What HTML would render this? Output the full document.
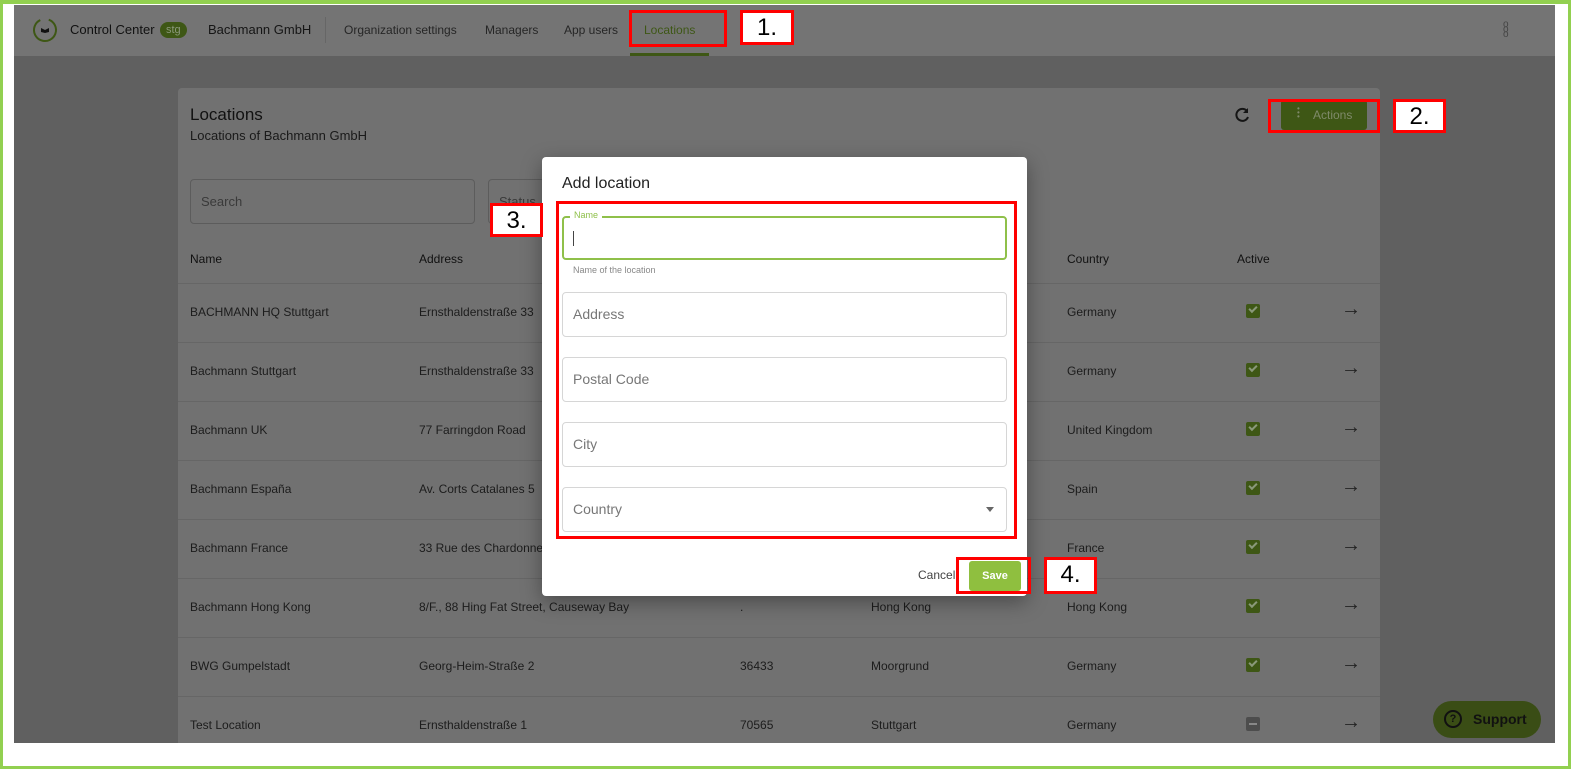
<!DOCTYPE html>
<html><head><meta charset="utf-8"><style>
*{box-sizing:border-box;margin:0;padding:0}
body{width:1571px;height:769px;background:#fff;position:relative;overflow:hidden;font-family:"Liberation Sans",sans-serif}
.frame{position:absolute;left:0;top:0;width:1571px;height:769px;border:3px solid #92d050;border-top-width:4px}
.shot{position:absolute;left:14px;top:5px;width:1541px;height:738px;background:#606060;overflow:hidden}
.top{position:absolute;left:0;top:0;width:1541px;height:51px;background:#747474}
.t{position:absolute;white-space:nowrap}
.card{position:absolute;left:164px;top:83px;width:1202px;height:700px;background:#717171;border-radius:4px}
.row{position:absolute;left:0;width:1202px;border-top:1px solid #666}
.red{position:absolute;border:3px solid #f00}
.lab{position:absolute;border:3px solid #f00;background:#fff;font-size:24px;color:#000;text-align:center;line-height:29px}
.field{position:absolute;left:20px;width:445px;height:45px;border:1px solid #d6d6d6;border-radius:4px;font-size:14px;color:#777;padding:13px 10px}
.chk{position:absolute;width:14px;height:14px;background:#3e5715;border-radius:2px}
.chk:after{content:"";position:absolute;left:3px;top:2px;width:6px;height:3px;border-left:2px solid #8a987a;border-bottom:2px solid #8a987a;transform:rotate(-45deg)}
</style></head><body>
<div class="frame"></div>
<div class="shot">
 <div class="top">
  <svg style="position:absolute;left:18px;top:12px" width="26" height="26"><circle cx="13" cy="13" r="11" fill="none" stroke="#3e5715" stroke-width="2" stroke-dasharray="60 9" transform="rotate(-70 13 13)"/><path d="M9 11l4 2 4-2v4l-4 1-4-1z" fill="#111"/></svg>
  <div class="t" style="left:56px;top:17px;font-size:13px;color:#111">Control Center</div>
  <div class="t" style="left:146px;top:17px;background:#3e5715;color:#8a987a;font-size:11px;border-radius:9px;padding:2px 6px">stg</div>
  <div class="t" style="left:194px;top:17px;font-size:13px;color:#151515">Bachmann GmbH</div>
  <div style="position:absolute;left:311px;top:12px;width:1px;height:26px;background:#666"></div>
  <div class="t" style="left:330px;top:18px;font-size:12px;color:#262626">Organization settings</div>
  <div class="t" style="left:471px;top:18px;font-size:12px;color:#262626">Managers</div>
  <div class="t" style="left:550px;top:18px;font-size:12px;color:#262626">App users</div>
  <div class="t" style="left:630px;top:18px;font-size:12px;color:#3e5715">Locations</div>
  <div style="position:absolute;left:616px;top:48px;width:79px;height:3px;background:#3e5715"></div>
  <div class="t" style="left:1489px;top:17px;font-size:10px;line-height:5px;color:#444">o<br>o<br>o</div>
 </div>
 <div class="card">
  <div class="t" style="left:12px;top:17px;font-size:17px;color:#111">Locations</div>
  <div class="t" style="left:12px;top:40px;font-size:13px;color:#1a1a1a">Locations of Bachmann GmbH</div>
  <div style="position:absolute;left:12px;top:91px;width:285px;height:45px;border:1px solid #5c5c5c;border-radius:4px;font-size:13px;color:#3a3a3a;padding:14px 10px">Search</div>
  <div style="position:absolute;left:310px;top:91px;width:80px;height:45px;border:1px solid #5c5c5c;border-radius:4px;font-size:13px;color:#3a3a3a;padding:14px 10px">Status</div>
  <svg style="position:absolute;left:1055px;top:18px" width="18" height="18"><path d="M14 5A6 6 0 1 0 15 11" fill="none" stroke="#151515" stroke-width="2"/><path d="M15 2v5h-5z" fill="#151515"/></svg>
  <div style="position:absolute;left:1103px;top:12px;width:86px;height:30px;background:#3e5715;border-radius:3px;color:#7f8a6a;font-size:12px;padding:8px 0 0 32px">Actions</div>
  <div class="t" style="left:1119px;top:19px;font-size:8px;line-height:4px;color:#7f8a6a">•<br>•<br>•</div>
  <div class="t" style="left:12px;top:164px;font-size:12px;color:#111">Name</div>
  <div class="t" style="left:241px;top:164px;font-size:12px;color:#111">Address</div>
  <div class="t" style="left:889px;top:164px;font-size:12px;color:#111">Country</div>
  <div class="t" style="left:1059px;top:164px;font-size:12px;color:#111">Active</div>
  <div class="row" style="top:195px"></div><div class="row" style="top:254px"></div><div class="row" style="top:313px"></div><div class="row" style="top:372px"></div><div class="row" style="top:431px"></div><div class="row" style="top:490px"></div><div class="row" style="top:549px"></div><div class="row" style="top:608px"></div>
  <div style="font-size:12px;color:#1c1c1c">
   <div class="t" style="left:12px;top:217px">BACHMANN HQ Stuttgart</div><div class="t" style="left:241px;top:217px">Ernsthaldenstraße 33</div><div class="t" style="left:889px;top:217px">Germany</div>
   <div class="t" style="left:12px;top:276px">Bachmann Stuttgart</div><div class="t" style="left:241px;top:276px">Ernsthaldenstraße 33</div><div class="t" style="left:889px;top:276px">Germany</div>
   <div class="t" style="left:12px;top:335px">Bachmann UK</div><div class="t" style="left:241px;top:335px">77 Farringdon Road</div><div class="t" style="left:889px;top:335px">United Kingdom</div>
   <div class="t" style="left:12px;top:394px">Bachmann España</div><div class="t" style="left:241px;top:394px">Av. Corts Catalanes 5</div><div class="t" style="left:889px;top:394px">Spain</div>
   <div class="t" style="left:12px;top:453px">Bachmann France</div><div class="t" style="left:241px;top:453px">33 Rue des Chardonnerets</div><div class="t" style="left:889px;top:453px">France</div>
   <div class="t" style="left:12px;top:512px">Bachmann Hong Kong</div><div class="t" style="left:241px;top:512px">8/F., 88 Hing Fat Street, Causeway Bay</div><div class="t" style="left:562px;top:512px">.</div><div class="t" style="left:693px;top:512px">Hong Kong</div><div class="t" style="left:889px;top:512px">Hong Kong</div>
   <div class="t" style="left:12px;top:571px">BWG Gumpelstadt</div><div class="t" style="left:241px;top:571px">Georg-Heim-Straße 2</div><div class="t" style="left:562px;top:571px">36433</div><div class="t" style="left:693px;top:571px">Moorgrund</div><div class="t" style="left:889px;top:571px">Germany</div>
   <div class="t" style="left:12px;top:630px">Test Location</div><div class="t" style="left:241px;top:630px">Ernsthaldenstraße 1</div><div class="t" style="left:562px;top:630px">70565</div><div class="t" style="left:693px;top:630px">Stuttgart</div><div class="t" style="left:889px;top:630px">Germany</div>
  </div>
  <div class="chk" style="left:1068px;top:216px"></div><div class="chk" style="left:1068px;top:275px"></div><div class="chk" style="left:1068px;top:334px"></div><div class="chk" style="left:1068px;top:393px"></div><div class="chk" style="left:1068px;top:452px"></div><div class="chk" style="left:1068px;top:511px"></div><div class="chk" style="left:1068px;top:570px"></div>
  <div style="position:absolute;left:1068px;top:629px;width:14px;height:14px;background:#4d4d4d;border-radius:2px"><div style="margin:6px 3px;height:2px;background:#888"></div></div>
  <div style="font-size:20px;color:#222">
   <div class="t" style="left:1163px;top:210px">→</div><div class="t" style="left:1163px;top:269px">→</div><div class="t" style="left:1163px;top:328px">→</div><div class="t" style="left:1163px;top:387px">→</div><div class="t" style="left:1163px;top:446px">→</div><div class="t" style="left:1163px;top:505px">→</div><div class="t" style="left:1163px;top:564px">→</div><div class="t" style="left:1163px;top:623px">→</div>
  </div>
 </div>
 <div style="position:absolute;left:1419px;top:696px;width:108px;height:37px;background:#3a4d15;border-radius:19px;color:#111;font-size:14px;font-weight:bold;padding:10px 0 0 40px">Support</div>
 <div style="position:absolute;left:1430px;top:705px;width:18px;height:18px;border:2px solid #111;border-radius:50%;font-size:11px;font-weight:bold;text-align:center;line-height:14px;color:#111">?</div>
 <div style="position:absolute;left:528px;top:152px;width:485px;height:439px;background:#fff;border-radius:4px;box-shadow:0 6px 20px rgba(0,0,0,.35)">
  <div class="t" style="left:20px;top:18px;font-size:16px;color:#222">Add location</div>
  <div style="position:absolute;left:20px;top:59px;width:445px;height:44px;border:2px solid #8fc04a;border-radius:4px"></div>
  <div class="t" style="left:28px;top:53px;background:#fff;padding:0 4px;font-size:9px;color:#8fc04a">Name</div>
  <div style="position:absolute;left:31px;top:74px;width:1px;height:15px;background:#444"></div>
  <div class="t" style="left:31px;top:108px;font-size:9px;color:#888">Name of the location</div>
  <div class="field" style="top:135px">Address</div>
  <div class="field" style="top:200px">Postal Code</div>
  <div class="field" style="top:265px">City</div>
  <div class="field" style="top:330px">Country</div>
  <div style="position:absolute;left:444px;top:350px;border:4px solid transparent;border-top:5px solid #666"></div>
  <div class="t" style="left:376px;top:411px;font-size:12px;color:#444">Cancel</div>
  <div style="position:absolute;left:427px;top:404px;width:52px;height:30px;background:#8fbf3f;border-radius:3px;color:#fff;font-size:11px;font-weight:bold;text-align:center;line-height:30px">Save</div>
 </div>
</div>
<div class="red" style="left:629px;top:10px;width:98px;height:37px"></div>
<div class="lab" style="left:740px;top:10px;width:54px;height:35px">1.</div>
<div class="red" style="left:1268px;top:99px;width:112px;height:34px"></div>
<div class="lab" style="left:1393px;top:99px;width:53px;height:34px">2.</div>
<div class="red" style="left:556px;top:201px;width:461px;height:338px"></div>
<div class="lab" style="left:490px;top:203px;width:53px;height:34px">3.</div>
<div class="red" style="left:956px;top:557px;width:75px;height:37px"></div>
<div class="lab" style="left:1044px;top:557px;width:53px;height:37px">4.</div>
</body></html>
